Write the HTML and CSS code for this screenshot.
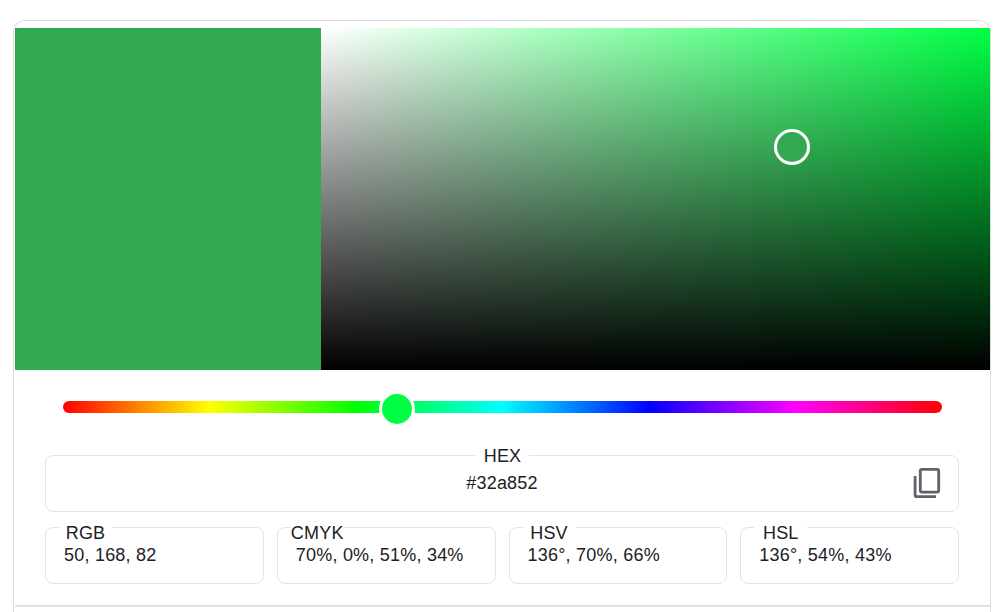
FILE: index.html
```html
<!DOCTYPE html>
<html lang="en">
<head>
    <meta charset="UTF-8">
    <meta name="viewport" content="width=device-width, initial-scale=1.0">
    <title>Color picker</title>
    <link rel="stylesheet" href="styles.css">
</head>
<body>

<div class="picker">
    <div class="colors">
        <div class="preview"></div>
        <div class="shades">
            <div class="shade-handle"></div>
        </div>
    </div>

    <div class="hue-slider">
        <div class="hue-handle"></div>
    </div>

    <div class="field hex-field">
        <span class="label">HEX</span>
        <span class="value">#32a852</span>
        <svg class="copy-icon" width="28" height="32" viewBox="0 0 28 32" fill="none" stroke="#5f6368" stroke-width="2.8">
            <rect x="7.3" y="2.3" width="18.4" height="22.8" rx="1.6"/>
            <path d="M2.1 9V28Q2.1 29.7 3.8 29.7H23"/>
        </svg>
    </div>

    <div class="values">
        <div class="field">
            <span class="label">RGB</span>
            <span class="value">50, 168, 82</span>
        </div>
        <div class="field">
            <span class="label label-wide">CMYK</span>
            <span class="value">70%, 0%, 51%, 34%</span>
        </div>
        <div class="field">
            <span class="label">HSV</span>
            <span class="value">136°, 70%, 66%</span>
        </div>
        <div class="field">
            <span class="label">HSL</span>
            <span class="value">136°, 54%, 43%</span>
        </div>
    </div>

    <div class="divider"></div>
</div>

</body>
</html>
```
FILE: styles.css
```css
/* General styling */
* {
    box-sizing: border-box;
}

body {
    font-family: "Liberation Sans", Arial, sans-serif;
    font-size: 18px;
    letter-spacing: 0.22px;
    color: #202124;
    background: #fff;
    margin: 0;
    padding: 20px 8px 0 13px;
}

.picker {
    height: 592px;
    border: 1px solid #dadce0;
    border-bottom: none;
    border-radius: 12px 12px 0 0;
    padding: 7px 0 0 1px;
}

/* Preview and shade area */
.colors {
    display: flex;
    height: 342px;
}

.preview {
    width: 306px;
    background: #32a852;
}

.shades {
    flex: 1;
    position: relative;
    background: linear-gradient(to top, #000, transparent), linear-gradient(to right, #fff, #00ff44);
}

.shade-handle {
    position: absolute;
    left: 453px;
    top: 101px;
    width: 36px;
    height: 36px;
    border: 3px solid #fff;
    border-radius: 50%;
    background: #32a852;
}

/* Hue slider */
.hue-slider {
    position: relative;
    height: 12px;
    margin: 31px 48px 0;
    border-radius: 6px;
    background: linear-gradient(to right, #f00, #ff0, #0f0, #0ff, #00f, #f0f, #f00);
}

.hue-handle {
    position: absolute;
    left: 316px;
    top: -10px;
    width: 36px;
    height: 36px;
    border: 3px solid #fff;
    border-radius: 50%;
    background: #00ff44;
}

/* Value fields */
.field {
    position: relative;
    height: 57px;
    border: 1px solid #e4e4e4;
    border-radius: 8px;
    padding: 16px 18px 0;
    line-height: 22px;
    white-space: nowrap;
}

.label {
    position: absolute;
    left: 13px;
    top: -6px;
    width: 53px;
    background: #fff;
    text-align: center;
}

.label-wide {
    text-align: left;
}

.hex-field {
    margin: 42px 31px 0 30px;
    text-align: center;
}

.hex-field .label {
    left: 430px;
    top: -11px;
}

.copy-icon {
    position: absolute;
    right: 17px;
    top: 11px;
}

.values {
    display: grid;
    grid-template-columns: repeat(4, 1fr);
    gap: 13px;
    margin: 15px 31px 0 30px;
}

.divider {
    height: 2px;
    margin-top: 21px;
    background: linear-gradient(#dadce0 50%, #ebebeb 50%);
}
```
